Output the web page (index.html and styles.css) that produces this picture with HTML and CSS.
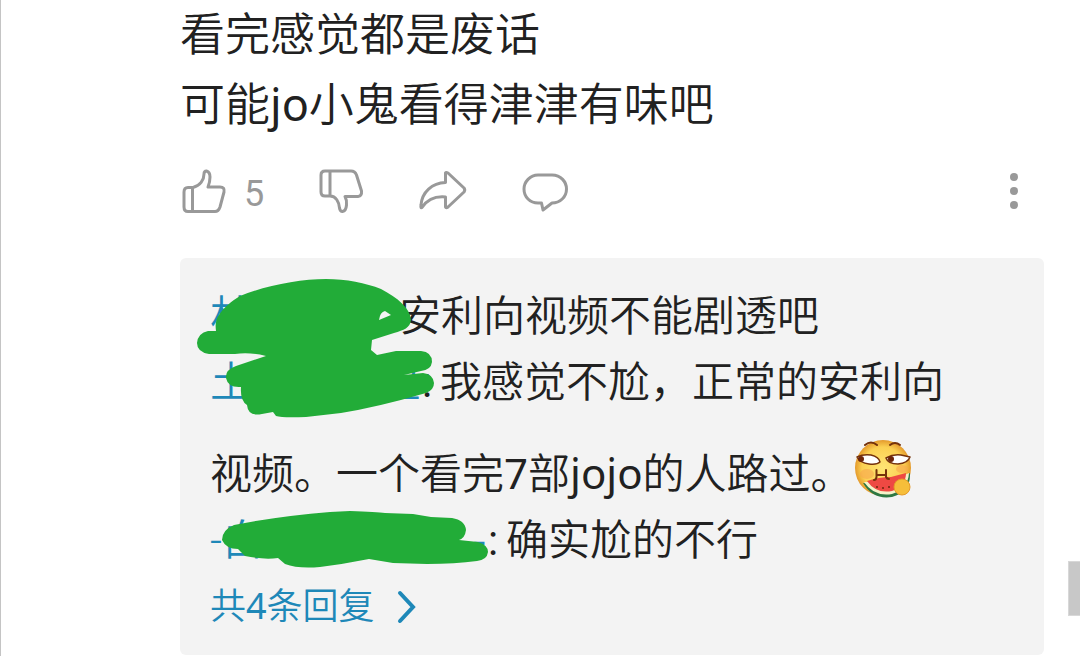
FILE: index.html
```html
<!DOCTYPE html>
<html lang="zh-CN">
<head>
<meta charset="utf-8">
<title>评论</title>
<link rel="stylesheet" href="styles.css">
</head>
<body>
<main class="comment">
  <p class="comment-text">看完感觉都是废话<br>可能<span class="latin">jo</span>小鬼看得津津有味吧</p>
  <div class="actions">
    <button class="action like" type="button" aria-label="点赞">
      <svg width="48" height="48" viewBox="180 168 48 48"><path d="M188 187.500H193C200 186 204 180 204 174Q204 171 206.500 171Q210 172 210 177Q210 182 208 187H220Q225 187 224 192L220 207Q218.500 211.500 215 211.500H188Q184 211.500 184 207V192Q184 187.500 188 187.500ZM192.500 187.500V211"/></svg>
      <span>5</span>
    </button>
    <button class="action dislike" type="button" aria-label="点踩">
      <svg width="48" height="48" viewBox="317 168 48 48"><path d="M325 171H351Q355 171 356.500 175L361.500 191Q362 196 358 196.500H345Q347 200 346.500 205Q346 211 342.500 211.500Q340 211.500 339.500 208C339 202 336 196 330 196H325Q321 196 321 192V175Q321 171 325 171ZM330 171V196"/></svg>
    </button>
    <button class="action share" type="button" aria-label="分享">
      <svg width="50" height="48" viewBox="418 168 50 48"><path d="M445.500 173Q446 172 448 173L464 188Q465.500 190 464 192L448 207Q446 208.500 445.500 207V197C435 196 427 200 422 207.500Q420.500 208.500 421 205C422 192 432 183 445.500 182.500Z"/></svg>
    </button>
    <button class="action reply" type="button" aria-label="回复">
      <svg width="48" height="48" viewBox="521 168 48 48"><path d="M538 175H552C561 175 566.500 182 566.500 189C566.500 197 560 203 552 203L543 210L541.500 203H538C530 203 524 197 524 189C524 182 530 175 538 175Z"/></svg>
    </button>
    <button class="action more" type="button" aria-label="更多">
      <svg width="12" height="48" viewBox="0 0 12 48"><circle cx="6" cy="9" r="4"/><circle cx="6" cy="23" r="4"/><circle cx="6" cy="37" r="4"/></svg>
    </button>
  </div>
  <section class="replies">
    <p class="line"><a class="name name-a" href="#">林</a>安利向视频不能剧透吧</p>
    <p class="line"><a class="name name-b" href="#"><span>土</span><span>但</span></a><span class="colon">:</span>我感觉不尬，正常的安利向</p>
    <p class="line tall"><span>视频。一个看完<span class="latin">7</span>部<span class="latin">jojo</span>的人路过。</span><svg class="emoji" width="60" height="60" viewBox="850 438 60 60" role="img" aria-label="吃瓜">
      <defs><radialGradient id="face"><stop offset="0" stop-color="#ffe575"/><stop offset=".75" stop-color="#fbd052"/><stop offset="1" stop-color="#e49a2c"/></radialGradient></defs>
      <circle cx="880" cy="467" r="28" fill="url(#face)"/>
      <g fill="#f8a84f" opacity=".6"><ellipse cx="864" cy="473" rx="7" ry="5"/><ellipse cx="899" cy="468" rx="6" ry="4"/></g>
      <path d="M860 482Q888 486 907 472Q908 491 889 496Q870 499 860 482Z" fill="#2d7843"/>
      <path d="M861 481Q888 482 906 472Q905 488 889 493Q871 496 861 481Z" fill="#f4f2c9"/>
      <path d="M864 480Q876 476 888 476L903 472Q903 485 889 490Q873 493 864 480Z" fill="#ee4943"/>
      <g fill="#fff" stroke="#75320b" stroke-width="1.500" stroke-linejoin="round"><path d="M854 456Q860 453 868 454Q876 456 877 461Q874 464 866 463Q857 462 854 456Z"/><path d="M883 457Q890 453 898 454L907 456Q905 462 895 463Q885 463 883 457Z"/></g>
      <g fill="none" stroke="#75320b" stroke-width="2" stroke-linecap="round"><path d="M862 444Q868 439 874 444M887 444Q892 440 897 444"/><path d="M873.500 469V476Q873 479 871 479M873.500 474H883M883 469V476Q884 478 886 478"/></g>
      <g fill="#6d260c"><circle cx="858" cy="458" r="3"/><circle cx="888" cy="458" r="3"/><circle cx="874" cy="486" r="1"/><circle cx="880" cy="487" r="1"/><circle cx="886" cy="486" r="1"/></g>
      <circle cx="899" cy="486" r="8" fill="#f6be3a" stroke="#e59b29"/>
    </svg></p>
    <p class="line"><a class="name name-c" href="#"><span>-白</span><span class="latin">-</span></a><span class="colon">:</span>确实尬的不行</p>
    <a class="all" href="#"><span>共<span class="latin">4</span>条回复</span><svg width="20" height="34" viewBox="0 0 20 34"><path d="M3 3L16 17L3 31"/></svg></a>
    <svg class="marker" width="864" height="398" viewBox="180 258 864 398" aria-hidden="true">
      <path fill-rule="evenodd" d="M216 331C215 324 216 319 219 315C223 308 232 301 240 296C264 286 300 279 326 279C346 279 366 283 381 289C398 298 410 308 411 320C410 328 404 330 394 333L372 340L371 350L377 355L396 351L421 351Q432 352 432 362Q431 370 421 371L404 375L423 373Q433 374 434 383Q434 390 426 393Q378 407 341 413L306 417Q282 418 276 416L273 412L262 414Q248 417 247 405Q240 401 241 387Q228 388 226 378Q225 370 236 366L266 356Q250 352 235 354L209 354Q197 352 197 343Q198 333 208 331ZM379 320L391 315L385 311Q380 312 379 320Z"/>
      <path d="M222 540Q222 530 234 525Q280 516 330 512L350 511Q377 512 385 513L413 514L431 517L452 518Q465 520 466 530Q465 538 459 540L478 542Q488 545 488 552Q487 560 477 561Q455 564 427 564L393 563L369 559Q344 564 320 567Q298 569 285 564L278 558Q264 560 245 556L238 549Q226 549 222 540Z"/>
    </svg>
  </section>
</main>
<div class="scroll-thumb"></div>
</body>
</html>
```
FILE: styles.css
```css
* { box-sizing: border-box; }

body {
  margin: 0;
  min-height: 100vh;
  border-left: 1px solid #c4c4c4;
  background: #fff;
  color: #212121;
  font-family: Roboto, "Noto Sans CJK SC DemiLight", "Noto Sans CJK SC", sans-serif;
  font-weight: 350;
}

.comment { padding: 1px 36px 0 179px; }

p { margin: 0; }

.latin {
  font-family: "Noto Sans", sans-serif;
  font-weight: 400;
  line-height: 1;
}

.comment-text {
  font-size: 45px;
  line-height: 70px;
}

.actions {
  display: flex;
  align-items: center;
  height: 48px;
  margin: 27px 0 42px;
}

.action {
  display: flex;
  align-items: center;
  padding: 0;
  border: 0;
  background: none;
  color: #999;
  font: 36px/48px Roboto, sans-serif;
}

.action svg {
  fill: none;
  stroke: #999;
  stroke-width: 3;
  stroke-linejoin: round;
}

.action span { margin-left: 16px; padding-top: 4px; }
.dislike { margin-left: 53px; }
.share { margin-left: 53px; }
.reply { margin-left: 53px; }
.more { margin-left: auto; margin-right: 24px; }
.more svg { fill: #999; stroke: none; }

.replies {
  position: relative;
  padding: 26px 30px 15px;
  border-radius: 6px;
  background: #f3f3f3;
  font-size: 42px;
}

.line {
  line-height: 66px;
  white-space: nowrap;
}

.tall {
  display: flex;
  align-items: flex-end;
  height: 92px;
}

.name, .all {
  color: #1e88b8;
  text-decoration: none;
}

.name {
  display: inline-flex;
  align-items: baseline;
  justify-content: space-between;
}

.name-a { width: 189px; }
.name-b { width: 210px; }
.name-c { width: 276px; }
.colon {
  display: inline-block;
  width: 20px;
  padding-right: 6px;
  font-weight: 400;
  text-align: center;
}

.emoji { margin-bottom: 9px; }

.all {
  display: flex;
  align-items: center;
  gap: 22px;
  width: max-content;
  font-size: 36px;
  line-height: 66px;
}

.all path {
  fill: none;
  stroke: #1e88b8;
  stroke-width: 4;
  stroke-linecap: round;
}

.marker {
  position: absolute;
  top: 0;
  left: 0;
  fill: #22ac38;
}

.scroll-thumb {
  position: fixed;
  right: 0;
  top: 561px;
  width: 12px;
  height: 55px;
  border: 1px solid #d8d8d8;
  border-right: 0;
  background: #c8c8c8;
}
```
